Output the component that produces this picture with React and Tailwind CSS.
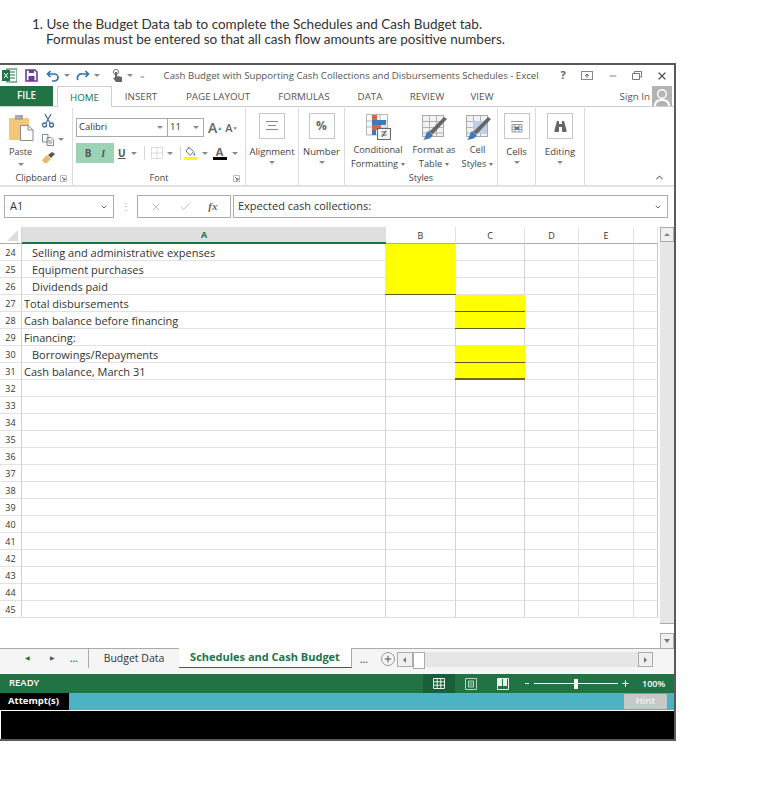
import { ChevronDown, ChevronUp, Plus, X, Check, Minus } from "lucide-react";

const rows = [
  { n: 24, a: "Selling and administrative expenses", indent: true, b: "y" },
  { n: 25, a: "Equipment purchases", indent: true, b: "y" },
  { n: 26, a: "Dividends paid", indent: true, b: "yl" },
  { n: 27, a: "Total disbursements", c: "yl" },
  { n: 28, a: "Cash balance before financing", c: "yl" },
  { n: 29, a: "Financing:" },
  { n: 30, a: "Borrowings/Repayments", indent: true, c: "yl" },
  { n: 31, a: "Cash balance, March 31", c: "yd" },
  ...Array.from({ length: 14 }, (_, i) => ({ n: 32 + i, a: "" })),
];

const plainCell = "border-r border-[#d4d4d4] border-b border-b-[#e2e2e2]";
const fills = {
  y: "-ml-px bg-[#ffff00]",
  yl: "-ml-px bg-[#ffff00] border-b border-b-[#5c5c20]",
  yd: "-ml-px bg-[#ffff00] border-b-2 border-b-[#6b6b10]",
};

function Caret({ className = "" }) {
  return <span className={"inline-block w-0 h-0 border-x-[3px] border-x-transparent border-t-[3px] border-t-[#8a8a8a] " + className} />;
}

function Group({ width, label, launcher, children }) {
  return (
    <div style={{ width }} className="flex flex-col border-r border-[#dcdcdc] mt-[1px] shrink-0">
      <div className="flex-1 min-h-0">{children}</div>
      <div className="h-[14px] flex items-center relative text-[9px] text-[#444]">
        <span className="flex-1 text-center">{label}</span>
        {launcher && (
          <svg width="7" height="7" viewBox="0 0 7 7" className="absolute right-[5px] top-[4px]">
            <path d="M0.5 6.5V0.5H6.5V6.5Z" fill="none" stroke="#bbb" />
            <path d="M2 2L5 5M5 3V5H3" fill="none" stroke="#666" />
          </svg>
        )}
      </div>
    </div>
  );
}

function BoxButton({ label, children, boxClass = "w-[26px]" }) {
  return (
    <div className="flex flex-col items-center pt-[5px]">
      <div className={"h-[26px] border border-[#c6c6c6] flex items-center justify-center " + boxClass}>{children}</div>
      <div className="text-[9.5px] text-[#444] mt-[7px] leading-[12px] whitespace-nowrap">{label}</div>
      <Caret className="mt-[3px]" />
    </div>
  );
}

function StyleButton({ width, icon, line1, line2 }) {
  return (
    <div style={{ width }} className="flex flex-col items-center pt-[5px] shrink-0">
      <div className="h-[28px]">{icon}</div>
      <div className="text-[9.2px] leading-[14px] text-[#444] mt-[2px] whitespace-nowrap">{line1}</div>
      <div className="text-[9.2px] leading-[14px] text-[#444] whitespace-nowrap flex items-center gap-[3px]">
        {line2}
        <span className="inline-block w-0 h-0 border-x-[2.5px] border-x-transparent border-t-[3px] border-t-[#777]" />
      </div>
    </div>
  );
}

function MiniGrid({ children }) {
  return (
    <svg width="28" height="28" viewBox="0 0 28 28">
      <rect x="2.5" y="2.5" width="21" height="21" fill="#f2f2f2" stroke="#a9a9a9" />
      <path d="M2.5 8.5H23.5M2.5 14.5H23.5M2.5 20H23.5M9.5 2.5V23.5M16.5 2.5V23.5" stroke="#b4b4b4" />
      {children}
    </svg>
  );
}

function Ribbon() {
  return (
    <div className="h-[80px] flex border-b-2 border-[#e2e2e2] text-[#444]">
      <Group width="73px" label="Clipboard" launcher>
        <div className="flex">
          <div className="w-[41px] flex flex-col items-center pt-[6px]">
            <svg width="26" height="27" viewBox="0 0 26 27">
              <rect x="1" y="4" width="20" height="22" rx="1" fill="#f0c877" />
              <rect x="7" y="1" width="8" height="5" fill="#a8a8a8" />
              <path d="M12.5 11.5H20L25 16V26.5H12.5Z" fill="#fff" stroke="#8c8c8c" />
              <path d="M20 11.5V16H25" fill="none" stroke="#8c8c8c" />
            </svg>
            <span className="text-[9px] mt-[5px] leading-[11px]">Paste</span>
            <Caret className="mt-[6px]" />
          </div>
          <div className="flex flex-col pt-[5px] gap-[5px]">
            <svg width="14" height="15" viewBox="0 0 14 15">
              <path d="M4 1L9 10M10 1L5 10" stroke="#4d6f9b" strokeWidth="1.3" fill="none" />
              <circle cx="3.5" cy="12" r="2" fill="none" stroke="#3f6ba3" strokeWidth="1.3" />
              <circle cx="10.5" cy="12" r="2" fill="none" stroke="#3f6ba3" strokeWidth="1.3" />
            </svg>
            <div className="flex items-center gap-[3px]">
              <svg width="14" height="13" viewBox="0 0 14 13">
                <path d="M1.5 1.5H7V9H1.5ZM6 4.5H10L12.5 7V12.5H6Z" fill="#fff" stroke="#7e8c97" />
                <path d="M7.5 8H11M7.5 10H11" stroke="#7e8c97" />
              </svg>
              <Caret />
            </div>
            <svg width="15" height="13" viewBox="0 0 15 13">
              <path d="M1 9L6 4L10 8L6 12L3 12Z" fill="#e9bc63" />
              <path d="M7 4L11 1L14 3L10 7Z" fill="#555" />
            </svg>
          </div>
        </div>
      </Group>
      <Group width="173px" label="Font" launcher>
        <div className="pl-[3px] pt-[10px]">
          <div className="flex items-center h-[19px]">
            <div className="w-[92px] h-full border border-[#aaa] flex items-center justify-between pl-[2px] pr-[4px] text-[9.5px] text-[#333]">
              Calibri <Caret />
            </div>
            <div className="w-[36px] h-full border border-l-0 border-[#aaa] flex items-center justify-between pl-[2px] pr-[4px] text-[9.5px] text-[#333]">
              11 <Caret />
            </div>
            <span className="ml-[4px] text-[14px] font-semibold text-[#666] leading-none">A<sup className="text-[#4a86c5] text-[5px]">▲</sup></span>
            <span className="ml-[3px] text-[11px] font-semibold text-[#666] leading-none">A<sup className="text-[#4a86c5] text-[5px]">▼</sup></span>
          </div>
          <div className="flex items-center h-[20px] mt-[6px] text-[10px] font-bold text-[#555]">
            <div className="w-[38px] h-full bg-[#9dd3b5] flex items-center justify-around px-[4px]">
              <span>B</span>
              <span className="italic font-['Liberation_Serif',serif]">I</span>
            </div>
            <span className="ml-[4px] underline">U</span>
            <Caret className="ml-[5px]" />
            <div className="w-px h-[14px] bg-[#d6d6d6] ml-[7px]" />
            <svg width="12" height="12" viewBox="0 0 12 12" className="ml-[6px]">
              <rect x="0.5" y="0.5" width="11" height="11" fill="none" stroke="#bbb" strokeDasharray="1 1" />
              <path d="M6 0.5V11.5M0.5 6H11.5" stroke="#bbb" strokeDasharray="1 1" />
            </svg>
            <Caret className="ml-[4px]" />
            <div className="w-px h-[14px] bg-[#d6d6d6] ml-[7px]" />
            <div className="ml-[3px] w-[13px] flex flex-col items-center">
              <svg width="12" height="11" viewBox="0 0 12 11">
                <path d="M2 5L5 1.5L9.5 5.5L6 9.5Z" fill="#fff" stroke="#777" />
                <path d="M4 1L5 3" stroke="#777" />
                <path d="M10 6C11 7.5 11.5 8 11 9S9 9.5 9.5 8Z" fill="#3e8ed0" />
              </svg>
              <div className="w-[13px] h-[3px] bg-[#ffff00]" />
            </div>
            <Caret className="ml-[5px]" />
            <div className="ml-[5px] w-[14px] flex flex-col items-center leading-[11px] text-[11px] text-[#666]">
              A
              <div className="w-[14px] h-[3px] bg-black" />
            </div>
            <Caret className="ml-[5px]" />
          </div>
        </div>
      </Group>
      <Group width="53px" label="">
        <BoxButton label="Alignment">
          <svg width="14" height="12" viewBox="0 0 14 12">
            <path d="M1 1.5H13M3 5.5H11M1 9.5H13" stroke="#888" />
          </svg>
        </BoxButton>
      </Group>
      <Group width="46px" label="">
        <BoxButton label="Number">
          <span className="text-[12px] font-bold text-[#666]">%</span>
        </BoxButton>
      </Group>
      <Group width="153px" label="Styles">
        <div className="flex pl-[3px]">
          <StyleButton
            width="60px"
            line1="Conditional"
            line2="Formatting"
            icon={
              <svg width="28" height="28" viewBox="0 0 28 28">
                <path d="M2.5 1.5H23.5V22H2.5ZM2.5 8H23.5M2.5 14H23.5M9 1.5V22M16 1.5V22" fill="#fafafa" stroke="#b8b8b8" />
                <rect x="8" y="2" width="5" height="5" fill="#d9664a" />
                <rect x="8" y="7" width="14" height="5" fill="#3f79bd" />
                <rect x="8" y="12" width="9" height="5" fill="#d9664a" />
                <rect x="8" y="17" width="4" height="5" fill="#3f79bd" />
                <rect x="13.5" y="15.5" width="13" height="11" fill="#f4f4f4" stroke="#666" />
                <path d="M17.5 19H22.5M17.5 22H22.5M22 17.5L18 24" stroke="#555" fill="none" />
              </svg>
            }
          />
          <StyleButton
            width="52px"
            line1="Format as"
            line2="Table"
            icon={
              <MiniGrid>
                <path d="M27 6L13 21L9 19L24 4Z" fill="#666" />
                <path d="M8 18L13 22C10 27 6 26 3 27C6 24 5 21 8 18Z" fill="#3f79bd" />
              </MiniGrid>
            }
          />
          <StyleButton
            width="35px"
            line1="Cell"
            line2="Styles"
            icon={
              <MiniGrid>
                <rect x="9" y="8" width="14" height="12" fill="#b9d0e8" />
                <path d="M27 6L13 21L9 19L24 4Z" fill="#666" />
                <path d="M8 18L13 22C10 27 6 26 3 27C6 24 5 21 8 18Z" fill="#3f79bd" />
              </MiniGrid>
            }
          />
        </div>
      </Group>
      <Group width="38px" label="">
        <BoxButton label="Cells">
          <svg width="14" height="14" viewBox="0 0 14 14">
            <path d="M1 2.5H13M2 5.5H12V13H2ZM2 8H12M2 10.5H12M5 5.5V13M9 5.5V13" stroke="#999" fill="none" />
            <rect x="5" y="8" width="4" height="2.5" fill="#3f79bd" />
          </svg>
        </BoxButton>
      </Group>
      <Group width="49px" label="">
        <BoxButton label="Editing">
          <svg width="13" height="11" viewBox="0 0 13 11" fill="#666">
            <path d="M3 0H5V3H8V0H10L12.5 9A2 2 0 0 1 8 10V6H5V10A2 2 0 0 1 0.5 9Z" />
          </svg>
        </BoxButton>
      </Group>
      <div className="flex-1 flex items-end justify-end pr-[5px] pb-[2px]">
        <ChevronUp size={11} strokeWidth={3} className="text-[#888] mr-[4px]" />
      </div>
    </div>
  );
}

function TopBars() {
  return (
    <>
      <div className="h-[21px] flex items-center">
        <svg width="15" height="15" viewBox="0 0 15 15" className="ml-[2px]">
          <rect x="5" y="1" width="10" height="13" fill="#fff" stroke="#217346" />
          <path d="M8 4H13M8 7H13M8 10H13" stroke="#217346" />
          <rect x="0" y="2" width="8" height="11" fill="#217346" />
          <path d="M2 5L6 10M6 5L2 10" stroke="#fff" />
        </svg>
        <svg width="13" height="13" viewBox="0 0 13 13" className="ml-[8px]">
          <path d="M1 1H10L12 3V12H1Z" fill="none" stroke="#6a3d9a" strokeWidth="1.6" />
          <rect x="3.5" y="7" width="6" height="5" fill="#6a3d9a" />
          <rect x="4" y="1" width="5" height="3" fill="#6a3d9a" />
        </svg>
        <svg width="14" height="12" viewBox="0 0 14 12" className="ml-[8px]">
          <path d="M4.5 1L1.5 4L4.5 7M2 4H8.5A3.5 3.5 0 0 1 8.5 11H6" fill="none" stroke="#2e75b6" strokeWidth="1.7" />
        </svg>
        <Caret className="ml-[4px]" />
        <svg width="14" height="12" viewBox="0 0 14 12" className="ml-[6px]">
          <path d="M9.5 1L12.5 4L9.5 7M12 4H6A4 4 0 0 0 2 10" fill="none" stroke="#2e75b6" strokeWidth="1.7" />
        </svg>
        <Caret className="ml-[4px]" />
        <svg width="11" height="14" viewBox="0 0 11 14" className="ml-[12px]">
          <circle cx="4" cy="3" r="2.6" fill="none" stroke="#777" />
          <path d="M3 3H5V7L10 8V13H4L1 9L3 8.5Z" fill="#666" />
        </svg>
        <Caret className="ml-[4px]" />
        <span className="ml-[7px] text-[#888] text-[8px] leading-none">=</span>
        <span className="ml-[19px] mt-[2px] w-[397px] shrink-0 text-[9.65px] text-[#555] whitespace-nowrap">
          Cash Budget with Supporting Cash Collections and Disbursements Schedules - Excel
        </span>
        <span className="text-[11px] font-bold text-[#666]">?</span>
        <svg width="12" height="9" viewBox="0 0 12 9" className="ml-[15px]">
          <rect x="0.5" y="0.5" width="11" height="8" fill="none" stroke="#888" />
          <path d="M6 7V3M4 5L6 3L8 5" fill="none" stroke="#666" />
        </svg>
        <Minus size={10} strokeWidth={2} className="ml-[15px] text-[#666]" />
        <svg width="10" height="9" viewBox="0 0 10 9" className="ml-[14px]">
          <path d="M2.5 2V0.5H9.5V6H8M0.5 2.5H7.5V8.5H0.5Z" fill="none" stroke="#777" />
        </svg>
        <X size={12} strokeWidth={2.5} className="ml-[14px] text-[#555]" />
      </div>
      <div className="h-[21px] flex items-stretch border-b border-[#cfcfcf] text-[9.8px] text-[#555]">
        <div className="w-[53px] bg-[#217346] text-white flex items-center justify-center font-semibold shrink-0">FILE</div>
        <div className="w-[55px] h-[21px] ml-[4px] pt-[2px] bg-white border border-b-0 border-[#cfcfcf] text-[#217346] flex items-center justify-center shrink-0">HOME</div>
        <div className="pt-[2px] flex items-center justify-center w-[58px] shrink-0">INSERT</div>
        <div className="pt-[2px] flex items-center justify-center w-[96px] shrink-0">PAGE LAYOUT</div>
        <div className="pt-[2px] flex items-center justify-center w-[76px] shrink-0">FORMULAS</div>
        <div className="pt-[2px] flex items-center justify-center w-[56px] shrink-0">DATA</div>
        <div className="pt-[2px] flex items-center justify-center w-[58px] shrink-0">REVIEW</div>
        <div className="pt-[2px] flex items-center justify-center w-[52px] shrink-0">VIEW</div>
        <div className="flex-1 flex items-center justify-end gap-[2px] pr-[2px]">
          <span className="pt-[2px]">Sign In</span>
          <div className="w-[20px] h-[20px] bg-[#b4b4b4] overflow-hidden shrink-0">
            <svg width="20" height="20" viewBox="0 0 20 20">
              <circle cx="10" cy="8" r="5" fill="#fff" />
              <path d="M2 20C2 14 6 13 10 13S18 14 18 20Z" fill="#fff" />
              <circle cx="10" cy="8" r="3.6" fill="#b4b4b4" />
              <path d="M4 20C4 16 7 15 10 15S16 16 16 20Z" fill="#b4b4b4" />
            </svg>
          </div>
        </div>
      </div>
    </>
  );
}

function FormulaBar() {
  return (
    <div className="h-[23px] mt-[8px] flex items-stretch pl-[4px] pr-[6px] text-[11px] text-[#333]">
      <div className="w-[110px] border border-[#ababab] flex items-center justify-between pl-[5px] pr-[5px]">
        A1
        <ChevronDown size={8} strokeWidth={3} className="text-[#666]" />
      </div>
      <div className="w-[23px] flex items-center justify-center text-[#999] text-[10px]">⋮</div>
      <div className="w-[94px] border border-[#ababab] flex items-center justify-around px-[4px] text-[#c0c0c0]">
        <X size={12} strokeWidth={2} />
        <Check size={12} strokeWidth={2} />
        <span className="font-['Liberation_Serif',serif] italic font-bold text-[#666] text-[11px]">fx</span>
      </div>
      <div className="flex-1 ml-[2px] border border-[#ababab] flex items-center justify-between pl-[4px] pr-[5px]">
        Expected cash collections:
        <ChevronDown size={8} strokeWidth={3} className="text-[#666]" />
      </div>
    </div>
  );
}

const cols = "grid-cols-[22px_364px_70px_69px_54px_55px_24px] grid-rows-[17px]";

function Sheet() {
  return (
    <div className="w-[658px] shrink-0 flex flex-col">
      <div className={"grid h-[17px] text-[9px] leading-none text-[#333] " + cols}>
        <div className="bg-white border-r border-[#d4d4d4] border-b border-b-[#ababab] flex items-end justify-end pr-[3px] pb-[2px]">
          <span className="w-0 h-0 border-b-[11px] border-b-[#dcdcdc] border-l-[11px] border-l-transparent" />
        </div>
        <div className="bg-[#dfdfdf] border-b-2 border-[#217346] text-[#217346] font-bold flex items-center justify-center">A</div>
        {["B", "C", "D", "E", ""].map((h, i) => (
          <div key={i} className="border-r border-[#e2e2e2] border-b border-b-[#ababab] flex items-center justify-center">{h}</div>
        ))}
      </div>
      {rows.map((r) => (
        <div key={r.n} className={"grid h-[17px] text-[11px] leading-none text-[#333] " + cols}>
          <div className={"text-[9px] flex items-center justify-center " + plainCell}>{r.n}</div>
          <div className={"flex items-center whitespace-nowrap " + plainCell + (r.indent ? " pl-[10px]" : " pl-[2px]")}>{r.a}</div>
          <div className={fills[r.b] || plainCell} />
          <div className={fills[r.c] || plainCell} />
          <div className="border-r border-[#e2e2e2] border-b border-b-[#e2e2e2]" />
          <div className="border-r border-[#e2e2e2] border-b border-b-[#e2e2e2]" />
          <div className="border-r border-[#c8c8c8] border-b border-b-[#e2e2e2]" />
        </div>
      ))}
    </div>
  );
}

function ScrollBar() {
  return (
    <div className="ml-[2px] w-[14px] flex flex-col bg-[#e6e6e6]">
      <div className="h-[15px] bg-[#f0f0f0] border border-[#ababab] flex items-center justify-center">
        <span className="w-0 h-0 border-x-[3px] border-x-transparent border-b-[3px] border-b-[#888]" />
      </div>
      <div className="flex-1" />
      <div className="h-[11px] bg-white border-y border-[#ababab]" />
      <div className="h-[14px] bg-[#f0f0f0] border-x border-[#ababab] flex items-center justify-center">
        <span className="w-0 h-0 border-x-[3.5px] border-x-transparent border-t-[4px] border-t-[#777]" />
      </div>
    </div>
  );
}

function TabStrip() {
  return (
    <div className="h-[26px] flex bg-[#f5f5f5] text-[#555]">
      <div className="w-[179px] shrink-0 flex border-t border-[#ababab]">
        <div className="w-[89px] flex items-center h-[19px] text-[#217346] text-[7px] border-r border-[#ababab]">
          <span className="ml-[25px] text-[6px]">◀</span>
          <span className="ml-[20px] text-[6px] text-[#555]">▶</span>
          <span className="ml-[15px] font-bold text-[9px]">...</span>
        </div>
        <div className="flex-1 h-[19px] flex items-center justify-center text-[10.5px] text-[#333]">Budget Data</div>
      </div>
      <div className="w-[173px] shrink-0 h-[20px] bg-white border-b border-[#217346] border-r border-r-[#ababab] flex items-center justify-center text-[11px] font-bold text-[#217346]">
        Schedules and Cash Budget
      </div>
      <div className="flex-1 border-t border-[#ababab] flex items-start pt-[3px]">
        <span className="ml-[8px] mt-[1px] font-bold text-[9px] text-[#217346]">...</span>
        <span className="ml-[13px] w-[14px] h-[14px] rounded-full border border-[#999] flex items-center justify-center">
          <Plus size={10} strokeWidth={2.5} className="text-[#555]" />
        </span>
        <div className="ml-[2px] flex h-[15px] w-[256px]">
          <div className="w-[16px] bg-[#f0f0f0] border border-[#ababab] flex items-center justify-center">
            <span className="w-0 h-0 border-y-[3px] border-y-transparent border-r-[3px] border-r-[#777]" />
          </div>
          <div className="w-[12px] h-[17px] bg-white border border-[#ababab]" />
          <div className="flex-1 bg-[#e6e6e6]" />
          <div className="w-[15px] bg-[#f0f0f0] border border-[#ababab] flex items-center justify-center">
            <span className="w-0 h-0 border-y-[3px] border-y-transparent border-l-[3px] border-l-[#777]" />
          </div>
        </div>
      </div>
    </div>
  );
}

function StatusBar() {
  return (
    <div className="h-[19px] bg-[#217346] flex items-center text-white text-[9.5px]">
      <span className="ml-[9px] w-[414px] shrink-0 font-semibold">READY</span>
      <div className="w-[32px] h-full bg-[#19603a] flex items-center justify-center">
        <svg width="12" height="11" viewBox="0 0 12 11">
          <path d="M0.5 0.5H11.5V10.5H0.5ZM0.5 3.8H11.5M0.5 7.2H11.5M4.2 0.5V10.5M7.8 0.5V10.5" fill="none" stroke="#e8f2ec" />
        </svg>
      </div>
      <svg width="12" height="12" viewBox="0 0 12 12" className="ml-[10px]">
        <path d="M0.5 0.5H11.5V11.5H0.5Z" fill="none" stroke="#b9d3c4" />
        <path d="M3.5 3H8.5V9H3.5ZM4.5 5H7.5M4.5 7H7.5" fill="none" stroke="#b9d3c4" />
      </svg>
      <svg width="12" height="12" viewBox="0 0 12 12" className="ml-[20px]">
        <path d="M0.5 0.5H11.5V11.5H0.5Z" fill="none" stroke="#e8f2ec" />
        <path d="M1 1H5V8H1ZM6 1H10V8H6Z" fill="#e8f2ec" />
      </svg>
      <div className="ml-[16px] w-[4px] h-px bg-white" />
      <div className="ml-[5px] w-[84px] h-px bg-white flex items-center justify-center">
        <div className="w-[4px] h-[10px] bg-white" />
      </div>
      <Plus size={9} strokeWidth={3} className="ml-[3px]" />
      <span className="ml-[12px] font-semibold text-[9px]">100%</span>
    </div>
  );
}

export default function App() {
  return (
    <div className="w-[760px] h-[796px] bg-white font-['Open_Sans',sans-serif]">
      <div className="h-[63px] pl-[32px] pt-[17px] text-[13.5px] leading-[15px] text-[#333] font-['Lato',sans-serif]">
        <p>1. Use the Budget Data tab to complete the Schedules and Cash Budget tab.</p>
        <p className="pl-[14px]">Formulas must be entered so that all cash flow amounts are positive numbers.</p>
      </div>
      <div className="w-[676px] h-[678px] border-t-2 border-r-2 border-b-2 border-[#5a5a5a] flex flex-col">
        <TopBars />
        <Ribbon />
        <FormulaBar />
        <div className="h-[421px] mt-[9px] flex">
          <Sheet />
          <ScrollBar />
        </div>
        <TabStrip />
        <StatusBar />
        <div className="h-[18px] bg-[#4bb3c3] flex items-stretch justify-between border-b border-white">
          <div className="w-[69px] bg-black text-white font-bold text-[9.5px] flex items-center pl-[8px]">Attempt(s)</div>
          <div className="w-[43px] mr-[7px] my-[1px] bg-[#c8c8c8] rounded-[1px] text-[#f2f2f2] font-semibold text-[9.5px] flex items-center justify-center">Hint</div>
        </div>
        <div className="flex-1 bg-black ml-[1px]" />
      </div>
    </div>
  );
}
